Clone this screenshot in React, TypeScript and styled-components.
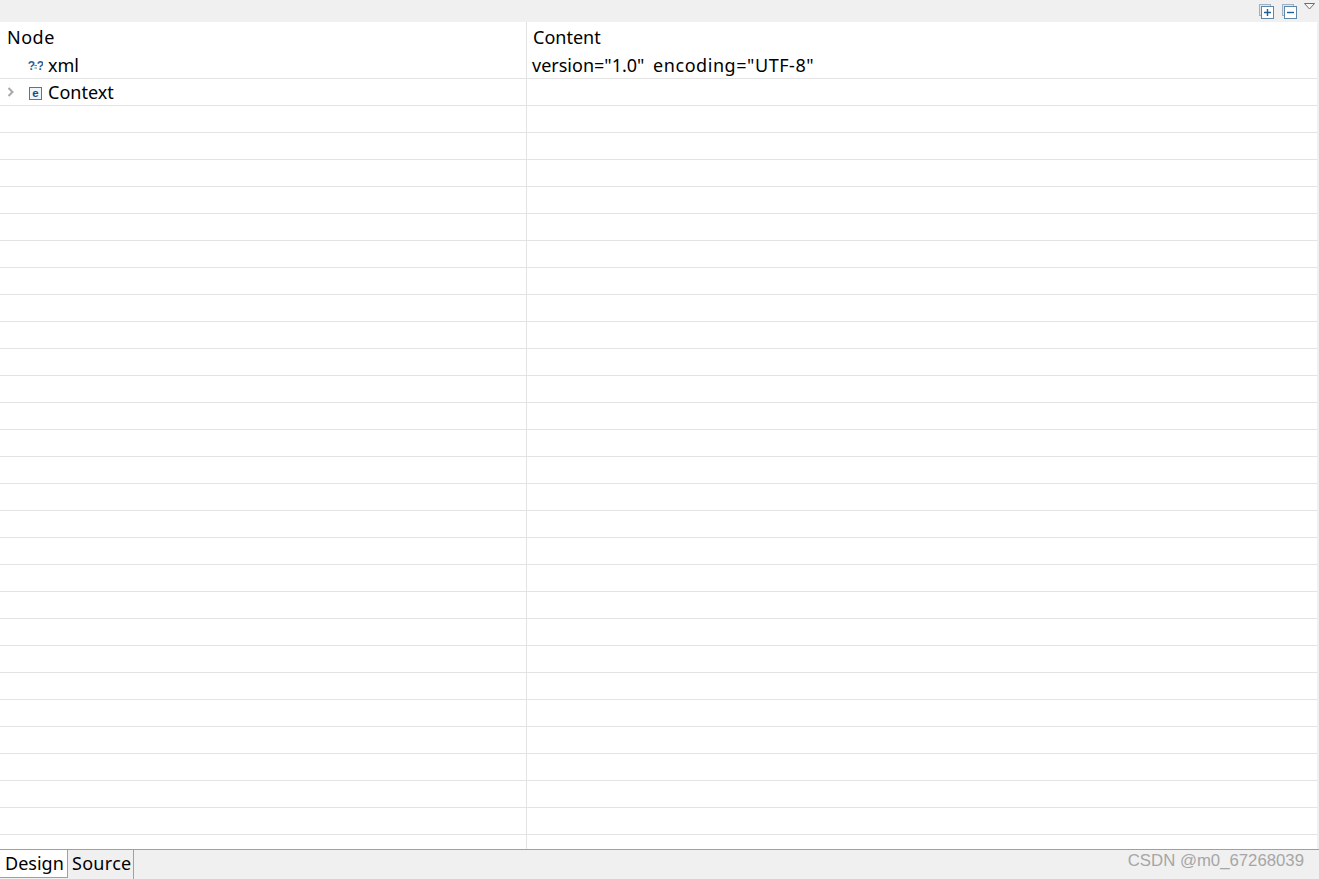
import React from "react";
import styled, { createGlobalStyle } from "styled-components";

const Global = createGlobalStyle`
  html, body { margin: 0; padding: 0; background: #fff; }
  #root { width: 1319px; height: 879px; }
`;

const Page = styled.div`
  width: 1319px;
  height: 879px;
  display: flex;
  flex-direction: column;
  overflow: hidden;
  font-family: "Noto Sans", "Open Sans", sans-serif;
  font-size: 18px;
  color: #000;
  background: #fff;
`;

const Toolbar = styled.div`
  height: 22px;
  flex: none;
  background: #f0f0f0;
  display: flex;
  justify-content: flex-end;
  align-items: flex-start;
  padding-right: 4px;
  box-sizing: border-box;
`;

const ToolIcon = styled.svg<{ $gap: number }>`
  display: block;
  width: 15px;
  height: 15px;
  margin-top: 4px;
  margin-right: ${(p) => p.$gap}px;
`;

const MenuArrow = styled.svg`
  display: block;
  width: 11px;
  height: 7px;
  margin-top: 3px;
`;

const TableArea = styled.div`
  flex: 1;
  min-height: 0;
  overflow: hidden;
  border-right: 2px solid #f0f0f0;
`;

const Row = styled.div<{ $header?: boolean }>`
  display: grid;
  grid-template-columns: 527px 1fr;
  height: ${(p) => (p.$header ? 30 : 27)}px;
  box-sizing: border-box;
  border-bottom: ${(p) => (p.$header ? "none" : "1px solid #e3e3e3")};
`;

const Cell = styled.div<{ $divider?: boolean }>`
  display: flex;
  align-items: center;
  min-width: 0;
  white-space: nowrap;
  box-sizing: border-box;
  border-right: ${(p) => (p.$divider ? "1px solid #e3e3e3" : "none")};
`;

const HeaderLabel = styled.span<{ $left: number; $spacing?: number }>`
  padding-left: ${(p) => p.$left}px;
  line-height: 30px;
  letter-spacing: ${(p) => p.$spacing ?? 0}px;
`;

const Twisty = styled.svg`
  display: block;
  width: 8px;
  height: 10px;
  margin-left: 7px;
  flex: none;
`;

const NodeIcon = styled.svg<{ $twisty?: boolean }>`
  display: block;
  width: 16px;
  height: 16px;
  flex: none;
  margin-left: ${(p) => (p.$twisty ? 12 : 27)}px;
  margin-right: 5px;
`;

const ContentText = styled.span`
  padding-left: 5px;
  word-spacing: 4px;
`;

const WideText = styled.span`
  letter-spacing: 0.55px;
`;

const TabBar = styled.div`
  height: 30px;
  flex: none;
  position: relative;
  display: flex;
  align-items: stretch;
  background: #f0f0f0;
  border-top: 1px solid #a0a0a0;
  box-sizing: border-box;
`;

const Tab = styled.div<{ $active?: boolean }>`
  display: flex;
  align-items: center;
  box-sizing: border-box;
  width: ${(p) => (p.$active ? 68 : 66)}px;
  height: ${(p) => (p.$active ? 28 : 29)}px;
  padding: 0 0 ${(p) => (p.$active ? 1 : 3)}px ${(p) => (p.$active ? 5 : 4)}px;
  background: ${(p) => (p.$active ? "#fff" : "#f0f0f0")};
  border-right: 1px solid #a0a0a0;
  border-bottom: ${(p) => (p.$active ? "1px solid #a0a0a0" : "none")};
  letter-spacing: ${(p) => (p.$active ? 0 : 0.3)}px;
`;

const Watermark = styled.div`
  position: absolute;
  right: 15px;
  top: 1px;
  font-family: "Liberation Sans", Arial, sans-serif;
  font-size: 16.75px;
  line-height: 20px;
  color: #a6a6a6;
`;

const PlusIcon = () => (
  <ToolIcon $gap={8} viewBox="0 0 15 15">
    <rect x="0.5" y="0.5" width="11" height="11" fill="#dfe7ef" stroke="#9db2c6" />
    <rect x="2.5" y="2.5" width="12" height="12" fill="#fff" stroke="#5f86a8" />
    <path d="M8.5 5v7M5 8.5h7" stroke="#1f5f96" strokeWidth="1.4" />
  </ToolIcon>
);

const MinusIcon = () => (
  <ToolIcon $gap={7} viewBox="0 0 15 15">
    <rect x="0.5" y="0.5" width="11" height="11" fill="#dfe7ef" stroke="#9db2c6" />
    <rect x="2.5" y="2.5" width="12" height="12" fill="#fff" stroke="#5f86a8" />
    <path d="M5 8.5h7" stroke="#1f5f96" strokeWidth="1.4" />
  </ToolIcon>
);

const PiIcon = () => (
  <NodeIcon viewBox="0 0 16 16">
    <text x="0.8" y="13" fontFamily="'Liberation Sans', sans-serif" fontWeight="700" fontSize="12" fill="#2b5f94">?</text>
    <path d="M7.4 8.5h2.6M7.4 11h2.6" stroke="#5f84a8" strokeWidth="1" />
    <text x="9.8" y="13" fontFamily="'Liberation Sans', sans-serif" fontWeight="700" fontSize="12" fill="#2b5f94">?</text>
  </NodeIcon>
);

const ElementIcon = () => (
  <NodeIcon $twisty viewBox="0 0 16 16">
    <rect x="2.5" y="3.5" width="12" height="12" fill="#eef5fb" stroke="#2f80c4" />
    <text x="8.5" y="13" textAnchor="middle" fontFamily="'Liberation Sans', sans-serif" fontWeight="700" fontSize="11.5" fill="#1b4a80">e</text>
  </NodeIcon>
);

const emptyRows = Array.from({ length: 28 }, (_, i) => i);

export default function App() {
  return (
    <Page>
      <Global />
      <Toolbar>
        <PlusIcon />
        <MinusIcon />
        <MenuArrow viewBox="0 0 11 7">
          <path d="M0.5 0.5h10L5.5 6z" fill="#f7f7f7" stroke="#6e6e6e" />
        </MenuArrow>
      </Toolbar>
      <TableArea>
        <Row $header>
          <Cell $divider><HeaderLabel $left={7} $spacing={0.5}>Node</HeaderLabel></Cell>
          <Cell><HeaderLabel $left={6}>Content</HeaderLabel></Cell>
        </Row>
        <Row>
          <Cell $divider><PiIcon />xml</Cell>
          <Cell><ContentText>version="1.0" <WideText>encoding="UTF-8"</WideText></ContentText></Cell>
        </Row>
        <Row>
          <Cell $divider>
            <Twisty viewBox="0 0 8 10">
              <path d="M1.5 1l4 4-4 4" fill="none" stroke="#a8a8a8" strokeWidth="2" />
            </Twisty>
            <ElementIcon />Context
          </Cell>
          <Cell />
        </Row>
        {emptyRows.map((i) => (
          <Row key={i}>
            <Cell $divider />
            <Cell />
          </Row>
        ))}
      </TableArea>
      <TabBar>
        <Tab $active>Design</Tab>
        <Tab>Source</Tab>
        <Watermark>CSDN @m0_67268039</Watermark>
      </TabBar>
    </Page>
  );
}
